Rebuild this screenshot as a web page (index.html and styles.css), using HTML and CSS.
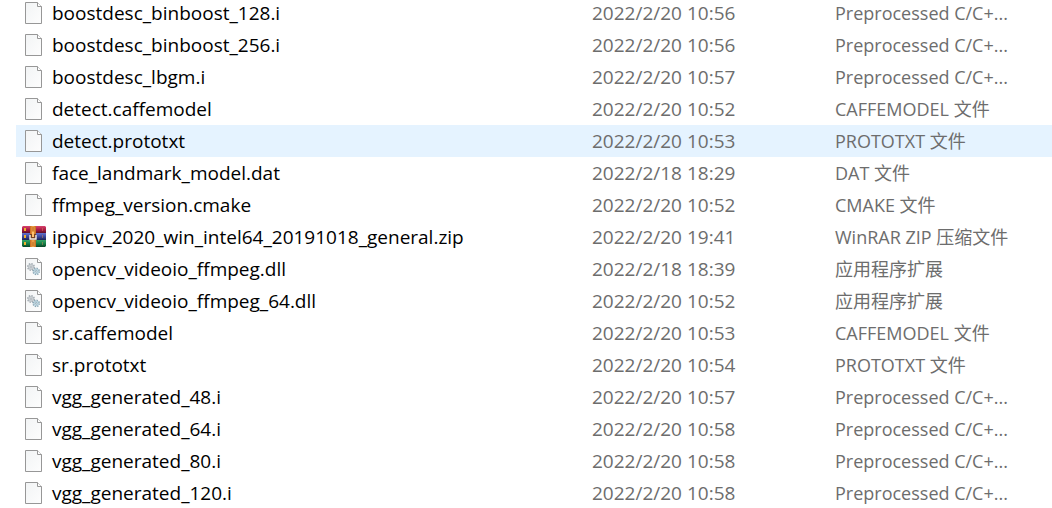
FILE: index.html
```html
<!DOCTYPE html>
<html lang="zh-CN">
<head>
    <meta charset="UTF-8">
    <meta name="viewport" content="width=device-width, initial-scale=1.0">
    <title>Files</title>
    <link rel="stylesheet" href="styles.css">
</head>
<body>
    <svg class="symbols" aria-hidden="true">
        <defs>
            <linearGradient id="paper" x1="0" y1="0" x2="1" y2="1">
                <stop offset="0" stop-color="#f2f4f5"/>
                <stop offset="1" stop-color="#fdfdfd"/>
            </linearGradient>
            <linearGradient id="belt" x1="0" y1="0" x2="1" y2="0">
                <stop offset="0" stop-color="#c8681c"/>
                <stop offset="0.5" stop-color="#f5a94c"/>
                <stop offset="1" stop-color="#c06a20"/>
            </linearGradient>
            <linearGradient id="red" x1="0" y1="0" x2="0" y2="1">
                <stop offset="0" stop-color="#d8446c"/>
                <stop offset="0.5" stop-color="#ae1c48"/>
                <stop offset="1" stop-color="#5c1026"/>
            </linearGradient>
            <linearGradient id="blue" x1="0" y1="0" x2="0" y2="1">
                <stop offset="0" stop-color="#6674cc"/>
                <stop offset="0.5" stop-color="#3c489e"/>
                <stop offset="1" stop-color="#1c2350"/>
            </linearGradient>
            <linearGradient id="green" x1="0" y1="0" x2="0" y2="1">
                <stop offset="0" stop-color="#35a566"/>
                <stop offset="0.5" stop-color="#168048"/>
                <stop offset="1" stop-color="#0b4427"/>
            </linearGradient>
        </defs>
        <symbol id="file" viewBox="0 0 24 24">
            <path d="M3.5 1.5H15.5L19.5 5.5V22.5H3.5Z" fill="url(#paper)" stroke="#979797"/>
            <path d="M15.5 1.5V5.5H19.5" fill="#fff" stroke="#979797"/>
        </symbol>
        <symbol id="dll" viewBox="0 0 24 24">
            <path d="M3.5 1.5H15.5L19.5 5.5V22.5H3.5Z" fill="url(#paper)" stroke="#979797"/>
            <path d="M15.5 1.5V5.5H19.5" fill="#fff" stroke="#979797"/>
            <circle cx="9" cy="10" r="3.2" fill="#dfe3e6" stroke="#a3abb2" stroke-width="1.6" stroke-dasharray="1.4 1.1"/>
            <circle cx="9" cy="10" r="2.4" fill="#dfe3e6" stroke="#b0b7bd" stroke-width="0.8"/>
            <circle cx="9" cy="10" r="1" fill="#fff" stroke="#8e979f" stroke-width="0.7"/>
            <circle cx="14.2" cy="14.4" r="3" fill="#d9edf5" stroke="#8aa5b3" stroke-width="1.6" stroke-dasharray="1.3 1.05"/>
            <circle cx="14.2" cy="14.4" r="2.2" fill="#d9edf5" stroke="#a5c0cd" stroke-width="0.8"/>
            <circle cx="14.2" cy="14.4" r="0.9" fill="#fff" stroke="#6f8fa0" stroke-width="0.7"/>
        </symbol>
        <symbol id="rar" viewBox="0 0 24 24">
            <path d="M1 1H23L24 2V8H0V2Z" fill="url(#red)"/>
            <path d="M0 8H24V15H0Z" fill="url(#blue)"/>
            <path d="M0 15H24V21L23 22H1L0 21Z" fill="url(#green)"/>
            <path d="M2 3H4V6H2ZM2 10H4V13H2ZM2 17H4V20H2Z" fill="#efb02c"/>
            <path d="M20 3H21V6H20ZM20 10H21V13H20ZM20 17H21V20H20Z" fill="#cf8b55" opacity="0.5"/>
            <path d="M8 1H14V22H8Z" fill="url(#belt)"/>
            <path d="M10 3H12M10 5H12M10 18H12M10 20H12" stroke="#a85c1b" stroke-width="0.8"/>
            <path d="M8 9H14V15H8Z" fill="#774122"/>
            <path d="M8 10V14H14V10" fill="none" stroke="#f2eee5" stroke-width="1.4"/>
            <path d="M10 7H12V12H10Z" fill="#ffc36d"/>
        </symbol>
    </svg>

    <main class="file-list">
        <table>
            <colgroup>
                <col class="col-name">
                <col class="col-date">
                <col class="col-type">
            </colgroup>
            <tbody>
                <tr>
                    <td><div class="name"><svg class="icon"><use href="#file"/></svg>boostdesc_binboost_128.i</div></td>
                    <td>2022/2/20 10:56</td>
                    <td class="type">Preprocessed C/C+...</td>
                </tr>
                <tr>
                    <td><div class="name"><svg class="icon"><use href="#file"/></svg>boostdesc_binboost_256.i</div></td>
                    <td>2022/2/20 10:56</td>
                    <td class="type">Preprocessed C/C+...</td>
                </tr>
                <tr>
                    <td><div class="name"><svg class="icon"><use href="#file"/></svg>boostdesc_lbgm.i</div></td>
                    <td>2022/2/20 10:57</td>
                    <td class="type">Preprocessed C/C+...</td>
                </tr>
                <tr>
                    <td><div class="name"><svg class="icon"><use href="#file"/></svg>detect.caffemodel</div></td>
                    <td>2022/2/20 10:52</td>
                    <td class="type">CAFFEMODEL 文件</td>
                </tr>
                <tr class="hovered">
                    <td><div class="name"><svg class="icon"><use href="#file"/></svg>detect.prototxt</div></td>
                    <td>2022/2/20 10:53</td>
                    <td class="type">PROTOTXT 文件</td>
                </tr>
                <tr>
                    <td><div class="name"><svg class="icon"><use href="#file"/></svg>face_landmark_model.dat</div></td>
                    <td>2022/2/18 18:29</td>
                    <td class="type">DAT 文件</td>
                </tr>
                <tr>
                    <td><div class="name"><svg class="icon"><use href="#file"/></svg>ffmpeg_version.cmake</div></td>
                    <td>2022/2/20 10:52</td>
                    <td class="type">CMAKE 文件</td>
                </tr>
                <tr>
                    <td><div class="name"><svg class="icon"><use href="#rar"/></svg>ippicv_2020_win_intel64_20191018_general.zip</div></td>
                    <td>2022/2/20 19:41</td>
                    <td class="type">WinRAR ZIP 压缩文件</td>
                </tr>
                <tr>
                    <td><div class="name"><svg class="icon"><use href="#dll"/></svg>opencv_videoio_ffmpeg.dll</div></td>
                    <td>2022/2/18 18:39</td>
                    <td class="type">应用程序扩展</td>
                </tr>
                <tr>
                    <td><div class="name"><svg class="icon"><use href="#dll"/></svg>opencv_videoio_ffmpeg_64.dll</div></td>
                    <td>2022/2/20 10:52</td>
                    <td class="type">应用程序扩展</td>
                </tr>
                <tr>
                    <td><div class="name"><svg class="icon"><use href="#file"/></svg>sr.caffemodel</div></td>
                    <td>2022/2/20 10:53</td>
                    <td class="type">CAFFEMODEL 文件</td>
                </tr>
                <tr>
                    <td><div class="name"><svg class="icon"><use href="#file"/></svg>sr.prototxt</div></td>
                    <td>2022/2/20 10:54</td>
                    <td class="type">PROTOTXT 文件</td>
                </tr>
                <tr>
                    <td><div class="name"><svg class="icon"><use href="#file"/></svg>vgg_generated_48.i</div></td>
                    <td>2022/2/20 10:57</td>
                    <td class="type">Preprocessed C/C+...</td>
                </tr>
                <tr>
                    <td><div class="name"><svg class="icon"><use href="#file"/></svg>vgg_generated_64.i</div></td>
                    <td>2022/2/20 10:58</td>
                    <td class="type">Preprocessed C/C+...</td>
                </tr>
                <tr>
                    <td><div class="name"><svg class="icon"><use href="#file"/></svg>vgg_generated_80.i</div></td>
                    <td>2022/2/20 10:58</td>
                    <td class="type">Preprocessed C/C+...</td>
                </tr>
                <tr>
                    <td><div class="name"><svg class="icon"><use href="#file"/></svg>vgg_generated_120.i</div></td>
                    <td>2022/2/20 10:58</td>
                    <td class="type">Preprocessed C/C+...</td>
                </tr>
            </tbody>
        </table>
    </main>
</body>
</html>
```
FILE: styles.css
```css
* {
    box-sizing: border-box;
}
body {
    margin: 0;
    background: #fff;
    font-family: "Open Sans", "Noto Sans CJK SC", sans-serif;
    font-size: 19px;
    line-height: 24px;
    color: #6d6d6d;
    overflow: hidden;
}
.symbols {
    position: absolute;
    width: 0;
    height: 0;
}
/* the list is scrolled a little, so the first row is cut off */
.file-list {
    margin-top: -3px;
    padding-left: 16px;
}
table {
    width: 100%;
    border-collapse: collapse;
    table-layout: fixed;
}
.col-name {
    width: 570px;
}
.col-date {
    width: 243px;
}
td {
    height: 32px;
    padding: 0 6px;
    white-space: nowrap;
}
.type {
    font-size: 18px;
}
.name {
    display: flex;
    align-items: center;
    gap: 6px;
    color: #000;
}
.icon {
    width: 24px;
    height: 24px;
    flex: none;
}
.hovered {
    background: #e5f3ff;
}
```
